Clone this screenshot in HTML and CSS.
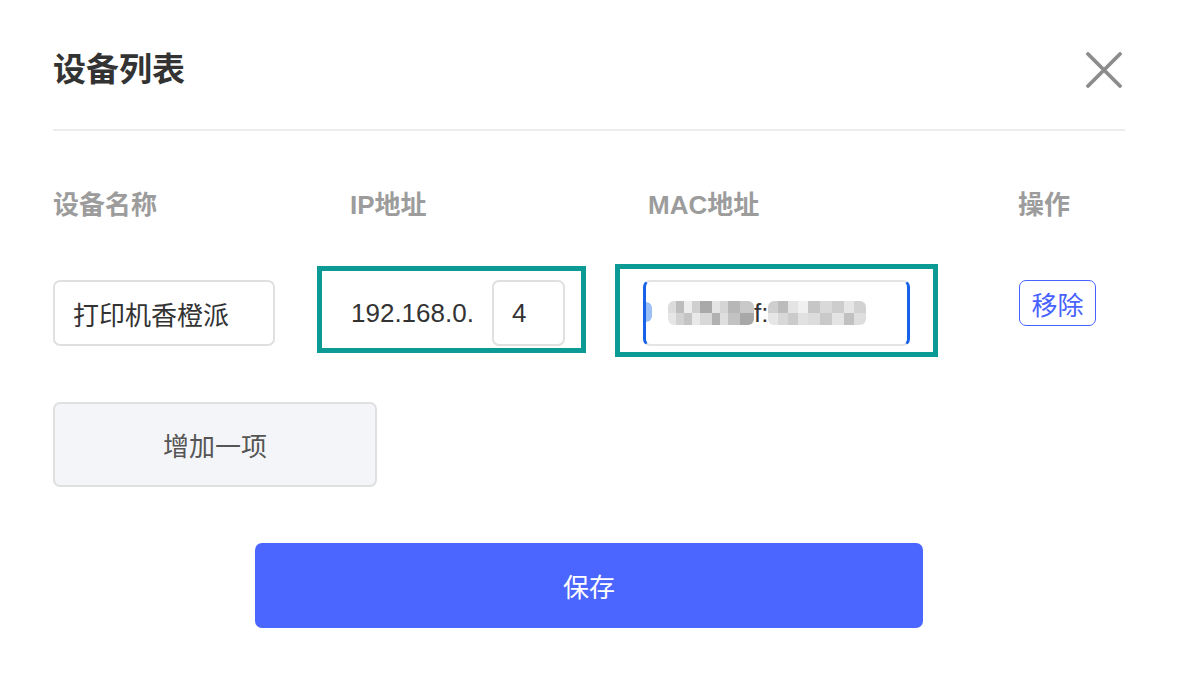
FILE: index.html
```html
<!DOCTYPE html>
<html lang="zh">
<head>
<meta charset="utf-8">
<title>设备列表</title>
<link rel="stylesheet" href="styles.css">
</head>
<body>
<div class="dialog">
  <div class="header">
    <h1 class="title">设备列表</h1>
    <button class="close" aria-label="关闭">
      <svg width="36" height="36" viewBox="0 0 36 36"><path d="M2 2 L34 34 M34 2 L2 34" stroke="#8c8c8c" stroke-width="3.8" stroke-linecap="round" fill="none"/></svg>
    </button>
  </div>
  <div class="divider"></div>
  <div class="cols">
    <div class="col c-name">设备名称</div>
    <div class="col c-ip">IP地址</div>
    <div class="col c-mac">MAC地址</div>
    <div class="col c-op">操作</div>
  </div>
  <div class="row">
    <div class="field name">打印机香橙派</div>
    <div class="mark ip">
      <span class="prefix">192.168.0.</span>
      <div class="field last">4</div>
    </div>
    <div class="mark mac">
      <div class="field macin">
        <span class="blur b1"></span><span class="f">f:</span><span class="blur b2"></span>
      </div>
    </div>
    <button class="remove">移除</button>
  </div>
  <button class="add">增加一项</button>
  <button class="save">保存</button>
</div>
</body>
</html>
```
FILE: styles.css
```css
html, body {
  margin: 0;
  padding: 0;
  background: #fff;
}
body {
  font-family: "Liberation Sans", "Noto Sans CJK SC", sans-serif;
  color: #333;
}
.dialog {
  width: 1072px;
  margin-left: 53px;
  display: flex;
  flex-direction: column;
  align-items: flex-start;
}
.header {
  width: 100%;
  height: 60px;
  margin-top: 40px;
  display: flex;
  align-items: center;
  justify-content: space-between;
}
.title {
  margin: 0;
  font-size: 33px;
  line-height: 40px;
  font-weight: 700;
  color: #333;
}
.close {
  border: 0;
  background: none;
  padding: 0;
  margin-right: 3px;
  width: 36px;
  height: 36px;
  display: flex;
}
.divider {
  width: 100%;
  height: 2px;
  background: #ececec;
  margin-top: 29px;
}
.cols {
  display: flex;
  margin-top: 56px;
  font-size: 26px;
  line-height: 36px;
  font-weight: 700;
  color: #9c9c9c;
}
.c-name { width: 297px; }
.c-ip { width: 298px; }
.c-mac { width: 370px; }
.row {
  display: flex;
  align-items: flex-start;
  margin-top: 41px;
}
.field {
  box-sizing: border-box;
  height: 66px;
  border: 2px solid #e0e0e0;
  border-radius: 7px;
  background: #fff;
  font-size: 26px;
  color: #333;
  display: flex;
  align-items: center;
}
.name {
  width: 222px;
  margin-top: 16px;
  padding-left: 18px;
}
.mark {
  box-sizing: border-box;
  border: 5px solid #0b9a94;
  display: flex;
  align-items: flex-start;
}
.ip {
  width: 269px;
  height: 87px;
  margin-left: 42px;
  margin-top: 2px;
  padding: 9px 0 0 29px;
}
.prefix {
  font-size: 26px;
  line-height: 66px;
  color: #333;
  width: 141px;
}
.last {
  width: 73px;
  padding-left: 18px;
}
.mac {
  width: 323px;
  height: 93px;
  margin-left: 29px;
  padding: 11px 0 0 23px;
}
.macin {
  position: relative;
  width: 267px;
  border-color: #e4e4e4 #1662e8;
  border-left-width: 3px;
  border-right-width: 3px;
  padding-left: 22px;
}
.macin::before {
  content: "";
  position: absolute;
  left: 0;
  top: 20px;
  width: 6px;
  height: 20px;
  border-radius: 0 10px 10px 0;
  background: #9cc0f5;
}
.blur {
  display: inline-block;
  height: 24px;
  border-radius: 6px;
}
.b1 {
  width: 86px;
  background:
    linear-gradient(90deg, #dcdcdc 0 8px, #bdbdbd 8px 16px, #ededed 16px 24px, #cfcfcf 24px 32px, #a9a9a9 32px 44px, #e4e4e4 44px 52px, #d5d5d5 52px 60px, #b7b7b7 60px 72px, #c9c9c9 72px 86px) top / 100% 12px no-repeat,
    linear-gradient(90deg, #e6e6e6 0 8px, #d2d2d2 8px 16px, #c4c4c4 16px 24px, #e9e9e9 24px 32px, #d8d8d8 32px 44px, #b1b1b1 44px 52px, #dedede 52px 60px, #c2c2c2 60px 72px, #a8a8a8 72px 86px) bottom / 100% 12px no-repeat;
}
.f {
  font-size: 26px;
  color: #333;
}
.b2 {
  width: 98px;
  background:
    linear-gradient(90deg, #cfcfcf 0 10px, #bcbcbc 10px 20px, #e4e4e4 20px 30px, #f0f0f0 30px 40px, #c6c6c6 40px 52px, #d9d9d9 52px 64px, #cdcdcd 64px 76px, #e6e6e6 76px 86px, #d2d2d2 86px 98px) top / 100% 12px no-repeat,
    linear-gradient(90deg, #e6e6e6 0 10px, #d8d8d8 10px 20px, #cbcbcb 20px 30px, #e1e1e1 30px 40px, #dcdcdc 40px 52px, #c9c9c9 52px 64px, #e4e4e4 64px 76px, #c1c1c1 76px 86px, #dedede 86px 98px) bottom / 100% 12px no-repeat;
}
.remove {
  box-sizing: border-box;
  margin-left: 81px;
  margin-top: 16px;
  width: 77px;
  height: 46px;
  border: 1.5px solid #4762ff;
  border-radius: 7px;
  background: #fff;
  color: #4762ff;
  font-family: inherit;
  font-size: 26px;
  padding: 0;
}
.add {
  box-sizing: border-box;
  margin-top: 45px;
  width: 324px;
  height: 85px;
  border: 2px solid #e0e0e0;
  border-radius: 7px;
  background: #f4f5f8;
  color: #555;
  font-family: inherit;
  font-size: 26px;
  padding: 0;
}
.save {
  box-sizing: border-box;
  margin-top: 56px;
  margin-left: 202px;
  width: 668px;
  height: 85px;
  border: 0;
  border-radius: 7px;
  background: #4b65ff;
  color: #fff;
  font-family: inherit;
  font-size: 26px;
  padding: 0;
}
```
